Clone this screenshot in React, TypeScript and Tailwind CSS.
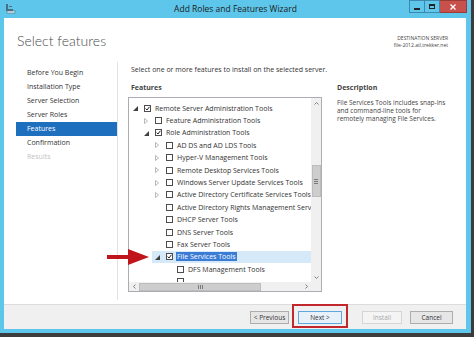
import React from "react";

type Row = {
  label: string;
  level: number;
  expander?: "open" | "closed";
  checked?: boolean;
  selected?: boolean;
};

const rows: Row[] = [
  { label: "Remote Server Administration Tools", level: 0, expander: "open", checked: true },
  { label: "Feature Administration Tools", level: 1, expander: "closed" },
  { label: "Role Administration Tools", level: 1, expander: "open", checked: true },
  { label: "AD DS and AD LDS Tools", level: 2, expander: "closed" },
  { label: "Hyper-V Management Tools", level: 2, expander: "closed" },
  { label: "Remote Desktop Services Tools", level: 2, expander: "closed" },
  { label: "Windows Server Update Services Tools", level: 2, expander: "closed" },
  { label: "Active Directory Certificate Services Tools", level: 2, expander: "closed" },
  { label: "Active Directory Rights Management Services Tools", level: 2 },
  { label: "DHCP Server Tools", level: 2 },
  { label: "DNS Server Tools", level: 2 },
  { label: "Fax Server Tools", level: 2 },
  { label: "File Services Tools", level: 2, expander: "open", checked: true, selected: true },
  { label: "DFS Management Tools", level: 3 },
  // next row is scrolled mostly out of view: only the checkbox edge shows
  { label: "", level: 3 },
];

const indent = ["ml-[1px]", "ml-[12px]", "ml-[23px]", "ml-[34px]"];

const steps = [
  "Before You Begin",
  "Installation Type",
  "Server Selection",
  "Server Roles",
  "Features",
  "Confirmation",
  "Results",
];

function Expander({ kind }: { kind?: "open" | "closed" }) {
  if (kind === "open")
    return (
      <svg width="5" height="5" viewBox="0 0 5 5" className="ml-[1px] mt-[1px]">
        <polygon points="5,0 5,5 0,5" fill="#404040" />
      </svg>
    );
  if (kind === "closed")
    return (
      <svg width="4" height="6" viewBox="0 0 4 6" className="ml-[1px]">
        <polygon points="0.5,0.5 3.5,3 0.5,5.5" fill="none" stroke="#a6a6a6" strokeWidth="0.8" />
      </svg>
    );
  return null;
}

function CheckBox({ checked }: { checked?: boolean }) {
  return (
    <div className="w-[7px] h-[7px] border border-[#4d4d4d] bg-white flex items-center justify-center shrink-0">
      {checked && (
        <svg width="5" height="5" viewBox="0 0 5 5">
          <polyline points="0.6,2.6 2,4 4.4,0.8" fill="none" stroke="#222" strokeWidth="1" />
        </svg>
      )}
    </div>
  );
}

function TreeRow({ row }: { row: Row }) {
  return (
    <div
      className={`h-[12.4px] flex items-center pl-[2px] whitespace-nowrap ${indent[row.level]} ${
        row.selected ? "bg-[#d6e9f8]" : ""
      }`}
    >
      <div className="w-[12px] flex items-center shrink-0">
        <Expander kind={row.expander} />
      </div>
      <CheckBox checked={row.checked} />
      {row.label && (
        <span
          className={`ml-[3px] px-[1px] leading-[9px] ${
            row.selected ? "bg-[#3a7bd6] text-white" : "text-[#333]"
          }`}
        >
          {row.label}
        </span>
      )}
    </div>
  );
}

function Button({ label, disabled, primary }: { label: string; disabled?: boolean; primary?: boolean }) {
  return (
    <div
      className={`h-[13px] flex items-center justify-center text-[6.5px] border ${
        disabled
          ? "bg-[#f4f4f4] border-[#d5d5d5] text-[#a8a8a8]"
          : primary
          ? "bg-[#e8f1fa] border-[#5ea8e0] text-[#333]"
          : "bg-[#e6e6e6] border-[#adadad] text-[#333]"
      }`}
    >
      {label}
    </div>
  );
}

export default function App() {
  return (
    <div className="relative w-[474px] h-[337px] bg-[#3c3c3c] overflow-hidden font-['Open_Sans',sans-serif]">
      <div className="w-[471px] h-[333px] bg-[#5ec6ea] flex flex-col">
        {/* title bar */}
        <div className="h-[18px] grid grid-cols-[1fr_auto_1fr] items-start">
          <div className="pl-[5px] pt-[3px]">
            <svg width="11" height="11" viewBox="0 0 11 11">
              <rect x="1" y="1" width="2" height="6" fill="#4a6f84" />
              <rect x="1" y="6" width="7" height="2" fill="#4a6f84" />
              <rect x="2" y="8" width="8" height="2" fill="#e8f4fa" stroke="#4a6f84" strokeWidth="0.6" />
              <rect x="4" y="3" width="3" height="1" fill="#4a6f84" />
            </svg>
          </div>
          <div className="h-[18px] flex items-center text-[8.5px] text-[#1c1c1c]">Add Roles and Features Wizard</div>
          <div className="flex justify-end pr-[4px]">
            <div className="w-[16px] h-[13px] border border-[#3d88ad] flex items-center justify-center">
              <div className="w-[6px] h-[2px] bg-[#222] mt-[4px]" />
            </div>
            <div className="w-[15px] h-[13px] border border-l-0 border-[#3d88ad] flex items-center justify-center">
              <div className="w-[6px] h-[5px] border border-t-2 border-[#222]" />
            </div>
            <div className="w-[27px] h-[13px] bg-[#c9514c] border border-l-0 border-[#9f3b37] flex items-center justify-center">
              <svg width="6" height="6" viewBox="0 0 6 6">
                <path d="M0.5 0.5 L5.5 5.5 M5.5 0.5 L0.5 5.5" stroke="#fff" strokeWidth="1.3" />
              </svg>
            </div>
          </div>
        </div>

        {/* body */}
        <div className="flex-1 ml-[4px] mr-[5px] mb-[4px] bg-white flex flex-col">
          <div className="h-[44px] flex justify-between">
            <div className="pl-[13px] pt-[13px] font-['Lato',sans-serif] font-light text-[14px] leading-[20px] text-[#4b4b4b]">
              Select features
            </div>
            <div className="pr-[18px] pt-[17px] text-right text-[5px] leading-[7px] text-[#444]">
              <div>DESTINATION SERVER</div>
              <div>file-2012.atl.trekker.net</div>
            </div>
          </div>

          <div className="flex-1 flex">
            <div className="w-[114px] border-r border-[#e2e2e2] mb-[4px] pt-[4px] pl-[12px] text-[7px] text-[#333]">
              {steps.map((s) => (
                <div
                  key={s}
                  className={`h-[14px] flex items-center pl-[11px] ${
                    s === "Features" ? "bg-[#1f6fbf] text-white" : s === "Results" ? "text-[#c2c2c2]" : ""
                  }`}
                >
                  {s}
                </div>
              ))}
            </div>

            <div className="flex-1 flex flex-col pl-[10px] text-[7px] text-[#333]">
              <div className="mt-[3px] ml-[3px] h-[10px] leading-[10px]">
                Select one or more features to install on the selected server.
              </div>
              <div className="flex mt-[8px]">
                <div className="w-[194px] flex flex-col">
                  <div className="h-[10px] leading-[10px] ml-[3px] font-bold text-[#444]">Features</div>
                  <div className="mt-[4px] h-[195px] border border-[#abadb3] flex flex-col">
                    <div className="flex-1 flex min-h-0">
                      <div className="flex-1 overflow-hidden pt-[4px] min-w-0">
                        {rows.map((r, i) => (
                          <TreeRow key={i} row={r} />
                        ))}
                      </div>
                      <div className="w-[10px] bg-[#f0f0f0] flex flex-col items-center">
                        <div className="h-[10px] flex items-center justify-center">
                          <svg width="5" height="3" viewBox="0 0 5 3">
                            <polyline points="0.5,2.5 2.5,0.5 4.5,2.5" fill="none" stroke="#666" strokeWidth="0.8" />
                          </svg>
                        </div>
                        <div className="mt-[57px] w-[9px] h-[32px] bg-[#cdcdcd] border border-[#bdbdbd] flex flex-col items-center justify-center gap-[1px]">
                          <div className="w-[4px] h-[1px] bg-[#7a7a7a]" />
                          <div className="w-[4px] h-[1px] bg-[#7a7a7a]" />
                          <div className="w-[4px] h-[1px] bg-[#7a7a7a]" />
                        </div>
                        <div className="flex-1" />
                        <div className="h-[10px] flex items-center justify-center">
                          <svg width="5" height="3" viewBox="0 0 5 3">
                            <polyline points="0.5,0.5 2.5,2.5 4.5,0.5" fill="none" stroke="#666" strokeWidth="0.8" />
                          </svg>
                        </div>
                      </div>
                    </div>
                    <div className="h-[9px] flex bg-[#f0f0f0]">
                      <div className="w-[10px] flex items-center justify-center">
                        <svg width="3" height="5" viewBox="0 0 3 5">
                          <polyline points="2.5,0.5 0.5,2.5 2.5,4.5" fill="none" stroke="#666" strokeWidth="0.8" />
                        </svg>
                      </div>
                      <div className="flex-1 flex items-center pr-[40px]">
                        <div className="w-full h-[8px] bg-[#cdcdcd] border border-[#bdbdbd] flex items-center justify-center gap-[1px]">
                          <div className="w-[1px] h-[4px] bg-[#7a7a7a]" />
                          <div className="w-[1px] h-[4px] bg-[#7a7a7a]" />
                          <div className="w-[1px] h-[4px] bg-[#7a7a7a]" />
                        </div>
                      </div>
                      <div className="w-[10px] flex items-center justify-center">
                        <svg width="3" height="5" viewBox="0 0 3 5">
                          <polyline points="0.5,0.5 2.5,2.5 0.5,4.5" fill="none" stroke="#666" strokeWidth="0.8" />
                        </svg>
                      </div>
                      <div className="w-[10px] bg-[#f0f0f0]" />
                    </div>
                  </div>
                </div>

                <div className="flex-1 ml-[15px] pr-[8px]">
                  <div className="h-[10px] leading-[10px] font-bold text-[#444]">Description</div>
                  <div className="mt-[6px] text-[6.5px] leading-[8px] text-[#444]">
                    File Services Tools includes snap-ins
                    <br />
                    and command-line tools for
                    <br />
                    remotely managing File Services.
                  </div>
                </div>
              </div>
            </div>
          </div>

          {/* footer */}
          <div className="h-[25px] bg-[#f0f0f0] border-t border-[#dcdcdc] flex items-start justify-end pr-[13px]">
            <div className="mt-[6px] w-[39px]">
              <Button label="< Previous" />
            </div>
            <div className="ml-[3px] -mt-[1px] border-2 border-[#c1272d] pt-[5px] pb-[2px] px-[4px]">
              <div className="w-[44px]">
                <Button label="Next >" primary />
              </div>
            </div>
            <div className="ml-[14px] mt-[6px] w-[40px]">
              <Button label="Install" disabled />
            </div>
            <div className="ml-[8px] mt-[6px] w-[43px]">
              <Button label="Cancel" />
            </div>
          </div>
        </div>
      </div>

      {/* annotation arrow */}
      <svg className="absolute left-[107px] top-[249px]" width="42" height="16" viewBox="0 0 42 16">
        <rect x="0" y="6" width="23" height="4" fill="#c0151c" />
        <polygon points="21,0 42,8 21,16" fill="#c0151c" />
      </svg>
    </div>
  );
}
